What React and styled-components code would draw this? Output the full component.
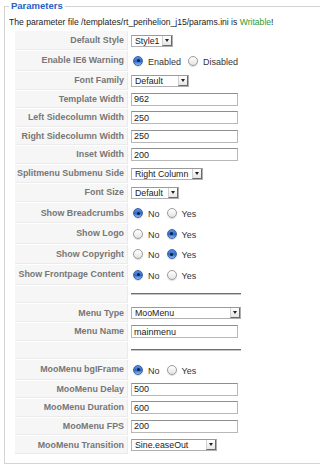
import React from 'react'
import styled, { createGlobalStyle } from 'styled-components'

const GlobalStyle = createGlobalStyle`
  html, body {
    margin: 0;
    padding: 0;
    background: #fff;
    overflow: hidden;
  }
  body {
    font-family: "Liberation Sans", Arial, sans-serif;
  }
`;

const rows = [
  { label: 'Default Style', kind: 'select', value: 'Style1', w: 42, h: 20 },
  { label: 'Enable IE6 Warning', kind: 'radio', options: ['Enabled', 'Disabled'], sel: 0, h: 20.5 },
  { label: 'Font Family', kind: 'select', value: 'Default', w: 58, h: 19 },
  { label: 'Template Width', kind: 'input', value: '962', h: 18.5 },
  { label: 'Left Sidecolumn Width', kind: 'input', value: '250', h: 18.5 },
  { label: 'Right Sidecolumn Width', kind: 'input', value: '250', h: 18.5 },
  { label: 'Inset Width', kind: 'input', value: '200', h: 18.5 },
  { label: 'Splitmenu Submenu Side', kind: 'select', value: 'Right Column', w: 72, h: 19 },
  { label: 'Font Size', kind: 'select', value: 'Default', w: 48, h: 19.5 },
  { label: 'Show Breadcrumbs', kind: 'radio', options: ['No', 'Yes'], sel: 0, h: 21 },
  { label: 'Show Logo', kind: 'radio', options: ['No', 'Yes'], sel: 1, h: 20.5 },
  { label: 'Show Copyright', kind: 'radio', options: ['No', 'Yes'], sel: 1, h: 20.5 },
  { label: 'Show Frontpage Content', kind: 'radio', options: ['No', 'Yes'], sel: 0, h: 20.5 },
  { label: '', kind: 'sep', h: 18.5 },
  { label: 'Menu Type', kind: 'select', value: 'MooMenu', w: 110, h: 19 },
  { label: 'Menu Name', kind: 'input', value: 'mainmenu', h: 18.5 },
  { label: '', kind: 'sep', h: 18.5 },
  { label: 'MooMenu bgIFrame', kind: 'radio', options: ['No', 'Yes'], sel: 0, h: 20.5 },
  { label: 'MooMenu Delay', kind: 'input', value: '500', h: 18.5 },
  { label: 'MooMenu Duration', kind: 'input', value: '600', h: 18.5 },
  { label: 'MooMenu FPS', kind: 'input', value: '200', h: 18.5 },
  { label: 'MooMenu Transition', kind: 'select', value: 'Sine.easeOut', w: 86, h: 19 },
];

const Value = ({ row }) => {
  if (row.kind === 'select') {
    return (
      <SelectBox $w={row.w}>
        <span>{row.value}</span>
        <SelectArrow><Caret /></SelectArrow>
      </SelectBox>
    );
  }
  if (row.kind === 'input') {
    return <TextInput>{row.value}</TextInput>;
  }
  if (row.kind === 'radio') {
    return (
      <RadioGroup>
        {row.options.map((opt, i) => (
          <RadioItem key={opt}>
            <Radio $on={i === row.sel} />
            <RadioText>{opt}</RadioText>
          </RadioItem>
        ))}
      </RadioGroup>
    );
  }
  return <Separator />;
};

const App = () => {
  return (
    <>
      <GlobalStyle />
      <Fieldset>
        <Legend>Parameters</Legend>
        <Notice>
          The parameter file /templates/rt_perihelion_j15/params.ini is <Writable>Writable</Writable>!
        </Notice>
        <Table>
          {rows.map((row, i) => (
            <Row key={i} $h={row.h}>
              <Key>{row.label}</Key>
              <Cell>
                <Value row={row} />
              </Cell>
            </Row>
          ))}
        </Table>
      </Fieldset>
    </>
  )
};

export default App;


const Fieldset = styled.fieldset`
margin: 0 0 0 4px;
padding: 0 4px 9px 4px;
border: 1px solid #d4d4d4;
border-right: none;
min-width: 0;
`;
const Legend = styled.legend`
padding: 0 2px;
color: #2461c6;
font-size: 9.5px;
font-weight: bold;
line-height: 12px;
`;
const Notice = styled.div`
margin-top: 4px;
font-size: 8.6px;
line-height: 12px;
color: #222;
white-space: nowrap;
`;
const Writable = styled.span`
color: #2f9a2f;
`;
const Table = styled.div`
display: flex;
flex-direction: column;
gap: 1px;
margin: 3px 0 0 6px;
`;
const Row = styled.div`
display: flex;
height: ${p => p.$h - 1}px;
`;
const Key = styled.div`
flex: 0 0 113px;
box-sizing: border-box;
display: flex;
align-items: center;
justify-content: flex-end;
padding-right: 3px;
background: #f6f6f6;
border-right: 1px solid #ebebeb;
border-bottom: 1px solid #ebebeb;
color: #777;
font-size: 8.9px;
font-weight: bold;
white-space: nowrap;
`;
const Cell = styled.div`
flex: 1;
display: flex;
align-items: center;
padding-left: 3px;
`;
const SelectBox = styled.div`
box-sizing: border-box;
width: ${p => p.$w}px;
height: 12px;
display: flex;
align-items: center;
justify-content: space-between;
padding-left: 3px;
background: #fff;
border: 1px solid #b0b0b0;
border-top-color: #9a9a9a;
font-size: 8.8px;
color: #222;
white-space: nowrap;
overflow: hidden;
`;
const SelectArrow = styled.div`
box-sizing: border-box;
flex: 0 0 10px;
height: 10px;
display: flex;
align-items: center;
justify-content: center;
border-left: 1px solid #d0d0d0;
border-right: 1px solid #6a6a6a;
border-bottom: 1px solid #6a6a6a;
background: linear-gradient(#ffffff, #e6e6e6);
`;
const Caret = styled.div`
width: 0;
height: 0;
border-left: 2.5px solid transparent;
border-right: 2.5px solid transparent;
border-top: 3px solid #222;
`;
const TextInput = styled.div`
box-sizing: border-box;
width: 107px;
height: 13px;
display: flex;
align-items: center;
padding-left: 2px;
background: #fff;
border: 1px solid #b8b8b8;
border-top-color: #8e8e8e;
font-size: 9px;
color: #222;
`;
const RadioGroup = styled.div`
display: flex;
align-items: center;
padding-left: 2px;
gap: 7px;
`;
const RadioItem = styled.div`
display: flex;
align-items: center;
gap: 5px;
`;
const Radio = styled.div`
box-sizing: border-box;
width: 10px;
height: 10px;
border-radius: 50%;
position: relative;
border: 1px solid ${p => (p.$on ? '#3a63a6' : '#9c9c9c')};
background: ${p => (p.$on
  ? 'linear-gradient(#5d93e0, #2c68c8 55%, #8ec0f4)'
  : 'linear-gradient(#ffffff, #e4e4e4)')};
box-shadow: 0 1px 1px rgba(0,0,0,0.15);

&::after {
  content: '';
  display: ${p => (p.$on ? 'block' : 'none')};
  position: absolute;
  left: 2.5px;
  top: 2.5px;
  width: 3px;
  height: 3px;
  border-radius: 50%;
  background: #0e1d38;
}
`;
const RadioText = styled.span`
font-size: 9px;
color: #333;
margin-top: 2px;
`;
const Separator = styled.div`
width: 110px;
height: 0;
border-top: 1px solid #707070;
border-bottom: 1px solid #c4c4c4;
`;
